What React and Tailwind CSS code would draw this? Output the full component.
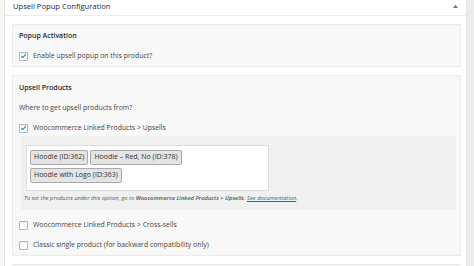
import React from "react";

const font = { fontFamily: '"Open Sans", "Noto Sans", sans-serif' };

const Check = ({ checked }) => (
  <span className="flex h-[9px] w-[9px] shrink-0 items-center justify-center rounded-[1px] border border-[#b4b9be] bg-white shadow-[inset_0_1px_1px_rgba(0,0,0,0.08)]">
    {checked && (
      <svg viewBox="0 0 10 10" className="h-[8px] w-[8px]">
        <path d="M1.8 5.2 L4 7.4 L8.4 2.4" fill="none" stroke="#1e8cbe" strokeWidth="1.6" />
      </svg>
    )}
  </span>
);

const Row = ({ checked, children }) => (
  <label className="flex h-[20px] items-center gap-[5px] text-[6.9px] text-[#444]">
    <Check checked={checked} />
    <span>{children}</span>
  </label>
);

const tags = ["Hoodie (ID:362)", "Hoodie – Red, No (ID:378)", "Hoodie with Logo (ID:363)"];

export default function App() {
  return (
    <div className="flex h-[266px] w-[474px] overflow-hidden bg-[#f1f1f1]" style={font}>
      <div className="w-[5px] shrink-0 border-r border-[#e5e5e5] bg-[#f7f7f7]" />
      <div className="flex w-[462px] shrink-0 flex-col border-r border-[#e5e5e5] bg-white">
        <div className="flex h-[16px] shrink-0 items-start justify-between border-b border-[#eeeeee] pl-[8px] pr-[8px]">
          <span className="text-[7.6px] leading-[12px] text-[#23282d]">Upsell Popup Configuration</span>
          <svg viewBox="0 0 8 6" className="mt-[4px] h-[4px] w-[5px]">
            <path d="M0 6 L4 1 L8 6 Z" fill="#72777c" />
          </svg>
        </div>

        <div className="flex flex-col gap-[8px] pl-[7px] pr-[5px] pt-[8px]">
          <div className="flex h-[43px] flex-col border border-[#ececec] bg-[#f8f8f8] pl-[6px] pr-[4px] pt-[5px]">
            <div className="text-[7px] font-semibold leading-[12px] text-[#23282d]">Popup Activation</div>
            <div className="mt-[4px]">
              <Row checked>Enable upsell popup on this product?</Row>
            </div>
          </div>

          <div className="flex h-[181px] flex-col border border-[#ececec] bg-[#f8f8f8] pl-[6px] pr-[4px] pt-[6px]">
            <div className="text-[7px] font-semibold leading-[12px] text-[#23282d]">Upsell Products</div>
            <div className="mt-[8px] text-[6.9px] leading-[12px] text-[#444]">Where to get upsell products from?</div>
            <div className="mt-[4px]">
              <Row checked>Woocommerce Linked Products &gt; Upsells</Row>
            </div>
            <div className="ml-[2px] mt-[-2px] flex h-[77px] flex-col bg-[#f0f0f0] pl-[5px] pr-[3px] pt-[9px]">
              <div className="h-[46px] w-[243px] border border-[#dddddd] bg-white pl-[3px] pt-[4px]">
                <div className="flex w-[200px] flex-wrap content-start gap-x-[2px] gap-y-[3px]">
                  {tags.map((t) => (
                    <span
                      key={t}
                      className="flex h-[15px] items-center rounded-[2px] border border-[#aaaaaa] bg-[#e4e4e4] px-[3px] text-[7px] text-[#333]"
                    >
                      {t}
                    </span>
                  ))}
                </div>
              </div>
              <p className="ml-[-2px] mt-[2px] text-[5.8px] italic leading-[10px] text-[#555]">
                To set the products under this option, go to{" "}
                <span className="font-semibold">Woocommerce Linked Products &gt; Upsells</span>.{" "}
                <a href="#" className="text-[#0073aa] underline">See documentation</a>.
              </p>
            </div>
            <div className="mt-[5px]">
              <Row>Woocommerce Linked Products &gt; Cross-sells</Row>
              <Row>Classic single product (for backward compatibility only)</Row>
            </div>
          </div>

          <div className="h-[6px] border-t border-[#e5e5e5] bg-[#fafafa]" />
        </div>
      </div>
      <div className="flex-1 bg-[#ececec]" />
    </div>
  );
}
